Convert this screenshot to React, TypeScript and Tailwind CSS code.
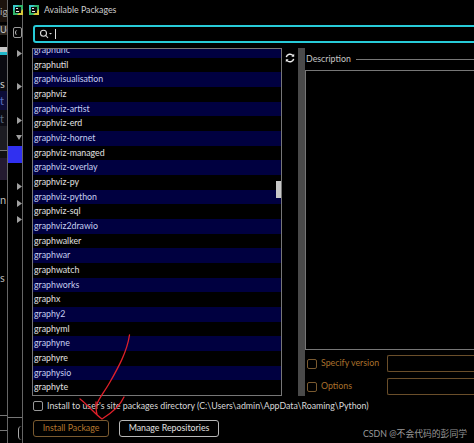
import React from "react";

const rows = ["graphunc","graphutil","graphvisualisation","graphviz","graphviz-artist","graphviz-erd","graphviz-hornet","graphviz-managed","graphviz-overlay","graphviz-py","graphviz-python","graphviz-sql","graphviz2drawio","graphwalker","graphwar","graphwatch","graphworks","graphx","graphy2","graphyml","graphyne","graphyre","graphysio","graphyte"];

function PyIcon() {
  return (
    <svg width="10" height="10" viewBox="0 0 10 10" className="shrink-0">
      <rect x="0" y="0" width="10" height="10" fill="#2fb36a" />
      <path d="M0 0h6L0 6z" fill="#37c8c8" />
      <path d="M10 10H4l6-6z" fill="#d8c83a" />
      <rect x="2" y="2" width="6" height="6" fill="#0a0a0a" />
      <path d="M3 3h2v1H3zM3 6h3v1H3z" fill="#e8e8e8" />
    </svg>
  );
}

function Arrow({ down = false, className = "" }: { down?: boolean; className?: string }) {
  return (
    <svg width="7" height="7" viewBox="0 0 7 7" className={"block " + className}>
      <path d={down ? "M0 1h6L3 6z" : "M1 0l5 3.5L1 7z"} fill="#a0a0a0" />
    </svg>
  );
}

export default function App() {
  return (
    <div className="relative flex h-[443px] w-[474px] overflow-hidden bg-black font-['Lato','Noto_Sans_CJK_SC',sans-serif] text-[8.8px] leading-none text-[#e0e0e0]">
      {/* editor sliver behind the dialog */}
      <div className="flex w-[8px] shrink-0 flex-col overflow-hidden border-r border-[#666] text-[11px]">
        <div className="h-[22px] whitespace-nowrap bg-[#1c130d] pt-[6px] text-[10px] text-[#aaa]">ig</div>
        <div className="mt-[3px] h-[10px] whitespace-nowrap bg-[#2e2822] text-[9px] text-[#ccc]">Uc</div>
        <div className="mt-[12px] h-[5px] bg-[#c8c8c8]" />
        <div className="h-[3px] bg-[#20b8ca]" />
        <div className="h-[36px] bg-[#0a0a10] pt-[23px] text-[#ccc]">s</div>
        <div className="h-[19px] bg-[#0c0c38] pt-[4px] text-[#5a70c0]">t</div>
        <div className="h-[16px] bg-[#0c0c14] pt-[3px] text-[#5a6a80]">t</div>
        <div className="h-[24px] bg-[#1c1c22]" />
        <div className="h-[1px] bg-[#777]" />
        <div className="h-[7px] bg-[#111]" />
        <div className="h-[22px] bg-[#241a30]" />
        <div className="mt-[14px] text-[#bbb]">n</div>
        <div className="mt-[67px] text-[#bbb]">s</div>
        <div className="mt-[132px] h-[1px] bg-[#777]" />
        <div className="mt-[14px] h-[1px] bg-[#777]" />
      </div>

      {/* tool window column */}
      <div className="flex w-[15px] shrink-0 flex-col items-start border-r border-[#666]">
        <div className="ml-[5px] mt-[5px]"><PyIcon /></div>
        <div className="ml-[5px] mt-[12px] flex h-[11px] w-[9px] items-center rounded-[2px] border border-[#999] pl-[1px]">
          <div className="h-[5px] w-[4px] rounded-l-full border-l border-[#bbb]" />
        </div>
        <Arrow className="mt-[12px] ml-[8px]" />
        <Arrow className="mt-[26px] ml-[8px]" />
        <Arrow className="mt-[27px] ml-[8px]" />
        <Arrow down className="mt-[10px] ml-[8px]" />
        <div className="mt-[5px] h-[17px] w-[14px] bg-[#3030f0]" />
        <Arrow className="mt-[20px] ml-[8px]" />
        <Arrow className="mt-[10px] ml-[8px]" />
        <Arrow className="mt-[9px] ml-[8px]" />
        <div className="mt-[194px] h-[1px] w-[14px] bg-[#777]" />
        <div className="ml-[10px] mt-[8px] h-[14px] w-[4px] rounded-l-full border-l border-[#aaa]" />
      </div>

      {/* dialog */}
      <div className="flex min-w-0 flex-1 flex-col pl-[10px]">
        <div className="flex h-[20px] shrink-0 items-center gap-[5px] text-[#cfcfcf]">
          <div className="-ml-[4px]"><PyIcon /></div>
          <span>Available Packages</span>
        </div>
        <div className="mt-[5px] flex h-[18px] w-[460px] shrink-0 items-center rounded-[3px] border-2 border-[#27cbd8] pl-[4px]">
          <svg width="13" height="10" viewBox="0 0 13 10" fill="none" stroke="#d8d8d8" strokeWidth="1.1">
            <circle cx="4.5" cy="4.2" r="3" />
            <path d="M6.8 6.5 9 9" />
            <path d="M10 4h3l-1.5 1.6z" fill="#d8d8d8" stroke="none" />
          </svg>
          <div className="ml-[3px] h-[10px] w-[1px] bg-[#ddd]" />
        </div>

        <div className="-ml-[1px] mt-[5px] flex h-[348px] shrink-0">
          <div className="relative h-full w-[250px] shrink-0 overflow-hidden border border-[#777]">
            <div className="-mt-[6px]">
              {rows.map((r, i) => (
                <div
                  key={r}
                  className={"flex h-[14.68px] items-center pl-[1px] " + (i % 2 === 0 ? "bg-[#000040] text-[#c6cff0]" : "text-[#e0e0e0]")}
                >
                  {r}
                </div>
              ))}
            </div>
            <div className="absolute right-0 top-[132px] h-[17px] w-[5px] bg-[#c8c8c8]" />
          </div>
          <div className="flex w-[16px] shrink-0 justify-center pt-[5px]">
            <svg width="10" height="10" viewBox="0 0 10 10" fill="none" stroke="#eee" strokeWidth="1.5">
              <path d="M1.3 4.2A3.8 3.8 0 0 1 8 2.6" />
              <path d="M8.7 5.8A3.8 3.8 0 0 1 2 7.4" />
              <path d="M9.2 0.8v3H6.4z" fill="#eee" stroke="none" />
              <path d="M0.8 9.2v-3h2.8z" fill="#eee" stroke="none" />
            </svg>
          </div>
          <div className="w-[7px] shrink-0 bg-[#4a4a4a]" />
          <div className="flex min-w-0 flex-1 flex-col">
            <div className="flex h-[22px] shrink-0 items-center gap-[5px] text-[#c8c8c8]">
              <span className="pl-[1px]">Description</span>
              <div className="h-[1px] flex-1 bg-[#777]" />
            </div>
            <div className="h-[280px] shrink-0 border-b border-l border-t border-[#777]" />
            <div className="mt-[5px] flex h-[17px] items-center text-[#a8702c]">
              <div className="ml-[2px] h-[10px] w-[10px] shrink-0 rounded-[2px] border border-[#7a5a30]" />
              <span className="ml-[4px] w-[66px] shrink-0 whitespace-nowrap">Specify version</span>
              <div className="h-[17px] flex-1 rounded-l-[2px] border-b border-l border-t border-[#6a4e2a]" />
            </div>
            <div className="mt-[6px] flex h-[17px] items-center text-[#a8702c]">
              <div className="ml-[2px] h-[10px] w-[10px] shrink-0 rounded-[2px] border border-[#7a5a30]" />
              <span className="ml-[4px] w-[66px] shrink-0">Options</span>
              <div className="h-[17px] flex-1 rounded-l-[2px] border-b border-l border-t border-[#6a4e2a]" />
            </div>
          </div>
        </div>

        <div className="mt-[5px] flex h-[10px] shrink-0 items-center">
          <div className="h-[10px] w-[10px] shrink-0 rounded-[2px] border border-[#999]" />
          <span className="ml-[4px] whitespace-nowrap text-[#d8d8d8]">Install to user's site packages directory (C:\Users\admin\AppData\Roaming\Python)</span>
        </div>
        <div className="mt-[9px] flex h-[17px] shrink-0 gap-[10px]">
          <div className="flex w-[76px] items-center justify-center rounded-[3px] border border-[#7a5a30] text-[#b5772e]">Install Package</div>
          <div className="flex w-[100px] items-center justify-center rounded-[3px] border border-[#b8b8b8] text-[#e0e0e0]">Manage Repositories</div>
        </div>
      </div>

      {/* hand-drawn arrow */}
      <svg className="pointer-events-none absolute left-0 top-0" width="474" height="443" fill="none" stroke="#e0202a" strokeWidth="1.3" strokeLinecap="round">
        <path d="M129.5 335C127 352 118 368 110 382C105 391 99 398 97 404" />
        <path d="M96 402C96 407 96 412 97 414" />
        <path d="M80 399C88 405 96 415 102 419C110 414 120 406 124 397" />
      </svg>

      <div className="absolute bottom-[4px] right-[7px] whitespace-nowrap text-[8.8px] text-[#9a9a9a]">CSDN @不会代码的彭同学</div>
    </div>
  );
}
